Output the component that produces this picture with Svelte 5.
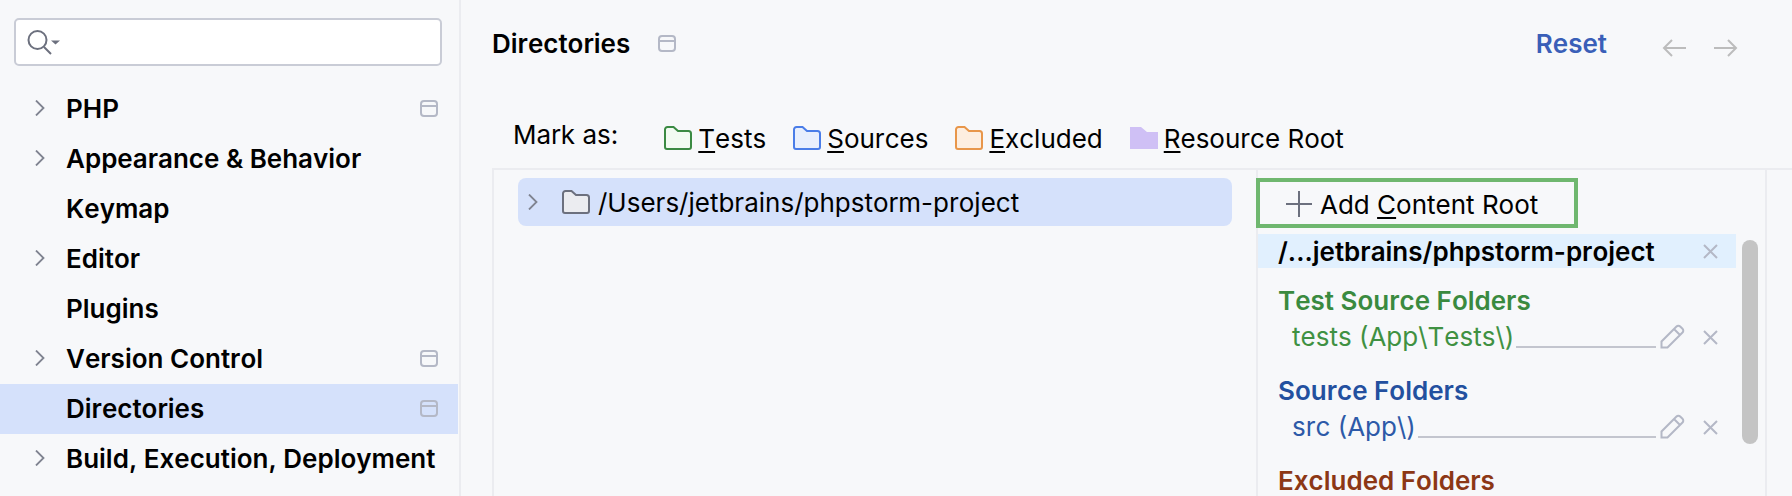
<script>
	const items = [
		{ name: 'PHP', arrow: true, mark: true },
		{ name: 'Appearance & Behavior', arrow: true },
		{ name: 'Keymap' },
		{ name: 'Editor', arrow: true },
		{ name: 'Plugins' },
		{ name: 'Version Control', arrow: true, mark: true },
		{ name: 'Directories', mark: true, selected: true },
		{ name: 'Build, Execution, Deployment', arrow: true }
	];

	const marks = [
		{ key: 'T', rest: 'ests', stroke: '#3b8a43', fill: '#f2fbf2' },
		{ key: 'S', rest: 'ources', stroke: '#4a7de8', fill: '#e8effd' },
		{ key: 'E', rest: 'xcluded', stroke: '#e8964a', fill: '#fdeee0' },
		{ key: 'R', rest: 'esource Root', stroke: '#cfc0f5', fill: '#cfc0f5', solid: true }
	];

	const groups = [
		{ title: 'Test Source Folders', path: 'tests (App\\Tests\\)', color: '#3a8a3f', light: '#3f9142' },
		{ title: 'Source Folders', path: 'src (App\\)', color: '#23509f', light: '#2d5aa8' }
	];
</script>

{#snippet folder(stroke, fill)}
	<svg class="folder" width="28" height="24" viewBox="0 0 28 24">
		<path d="M1 3.5A2.5 2.5 0 0 1 3.5 1h6l4.5 4h10.5A2.5 2.5 0 0 1 27 7.5V21a2 2 0 0 1-2 2H3a2 2 0 0 1-2-2z" fill={fill} stroke={stroke} stroke-width="2"/>
	</svg>
{/snippet}

{#snippet projectMark()}
	<svg class="pm" width="18" height="17" viewBox="0 0 18 17">
		<rect x="1" y="1" width="16" height="15" rx="3" fill="none" stroke="#b4b8c6" stroke-width="2"/>
		<path d="M1 6h16" stroke="#b4b8c6" stroke-width="2"/>
	</svg>
{/snippet}

{#snippet chevron()}
	<svg class="chev" width="11" height="16" viewBox="0 0 11 16">
		<path d="M1 .5L8.500 8 1 15.500" fill="none" stroke="#7f8390" stroke-width="1.8"/>
	</svg>
{/snippet}

{#snippet cross()}
	<svg class="cross" width="15" height="15" viewBox="0 0 15 15">
		<path d="M1 1l13 13M14 1L1 14" stroke="#b4b8c6" stroke-width="2"/>
	</svg>
{/snippet}

{#snippet pencil()}
	<svg class="pencil" width="25" height="25" viewBox="0 0 25 25">
		<path d="M1.500 23.500v-6L16.500 2.500a2.600 2.600 0 0 1 3.700 0l2.300 2.300a2.600 2.600 0 0 1 0 3.700L7.500 23.500zM14 5l6 6" fill="none" stroke="#b4b8c6" stroke-width="2"/>
	</svg>
{/snippet}

<div class="page">
	<aside>
		<div class="search">
			<svg width="34" height="25" viewBox="0 0 34 25">
				<circle cx="10.500" cy="10" r="9" fill="none" stroke="#6c707e" stroke-width="2"/>
				<path d="M17 17l7 7" stroke="#6c707e" stroke-width="2"/>
				<path d="M24 10.500h9l-4.500 4z" fill="#6c707e"/>
			</svg>
		</div>
		<ul>
			{#each items as item}
				<li class:selected={item.selected}>
					<span class="arrow">
						{#if item.arrow}{@render chevron()}{/if}
					</span>
					<span class="name">{item.name}</span>
					{#if item.mark}{@render projectMark()}{/if}
				</li>
			{/each}
		</ul>
	</aside>

	<main>
		<header>
			<h1>Directories</h1>
			{@render projectMark()}
			<span class="reset">Reset</span>
			<svg class="nav" width="24" height="20" viewBox="0 0 24 20">
				<path d="M24 10H2M10 2l-8 8 8 8" fill="none" stroke="#bcbcbc" stroke-width="2"/>
			</svg>
			<svg class="nav" width="24" height="20" viewBox="0 0 24 20">
				<path d="M0 10h22M14 2l8 8-8 8" fill="none" stroke="#bcbcbc" stroke-width="2"/>
			</svg>
		</header>

		<div class="markbar">
			<span class="label">Mark as:</span>
			{#each marks as m}
				<span class="mark">
					{#if m.solid}
						<svg class="folder" width="28" height="24" viewBox="0 0 28 24">
							<path d="M0 1h11l6 5h11v17H0z" fill={m.fill}/>
						</svg>
					{:else}
						{@render folder(m.stroke, m.fill)}
					{/if}
					<span><u>{m.key}</u>{m.rest}</span>
				</span>
			{/each}
		</div>

		<div class="panel">
			<div class="tree">
				<div class="root">
					{@render chevron()}
					{@render folder('#6c707e', '#ebecf0')}
					<span>/Users/jetbrains/phpstorm-project</span>
				</div>
			</div>

			<div class="roots">
				<button class="add">
					<svg width="26" height="26" viewBox="0 0 26 26">
						<path d="M0 13h26M13 0v26" stroke="#6c707e" stroke-width="2"/>
					</svg>
					<span>Add <u>C</u>ontent Root</span>
				</button>
				<div class="scroller">
					<div class="list">
						<div class="current">
							<span>/...jetbrains/phpstorm-project</span>
							{@render cross()}
						</div>
						{#each groups as g}
							<div class="group">
								<div class="title" style="color: {g.color}">{g.title}</div>
								<div class="entry">
									<span class="path" style="color: {g.light}">{g.path}</span>
									<span class="leader"></span>
									{@render pencil()}
									{@render cross()}
								</div>
							</div>
						{/each}
						<div class="group">
							<div class="title excluded">Excluded Folders</div>
						</div>
					</div>
					<div class="thumb"></div>
				</div>
			</div>
		</div>
	</main>
</div>

<style>
	:global(body) {
		background: #f7f8fa;
	}

	.page {
		display: flex;
		width: 1792px;
		height: 496px;
		overflow: hidden;
		font-family: Inter, "Liberation Sans", sans-serif;
		font-size: 26px;
		font-kerning: none;
		color: #000;
		background: #f7f8fa;
	}

	aside {
		width: 459px;
		flex: none;
		border-right: 2px solid #ebecf0;
	}

	.search {
		margin: 18px 17px 0 14px;
		height: 48px;
		box-sizing: border-box;
		border: 2px solid #c9ccd6;
		border-radius: 5px;
		background: #fff;
		padding: 10px 0 0 11px;
	}

	.search svg {
		display: block;
	}

	ul {
		list-style: none;
		margin: 18px 1px 0 0;
		padding: 0;
	}

	li {
		display: flex;
		align-items: center;
		height: 50px;
		box-sizing: border-box;
		padding: 0 20px 2px 35px;
		font-weight: 600;
	}

	li.selected {
		background: #d5e1fb;
	}

	.arrow {
		width: 31px;
		flex: none;
		display: flex;
	}

	.name {
		flex: 1;
		white-space: nowrap;
	}

	main {
		flex: 1;
		display: flex;
		flex-direction: column;
		min-width: 0;
	}

	header {
		display: flex;
		align-items: center;
		height: 86px;
		padding: 0 54px 0 31px;
	}

	h1 {
		margin: 0 28px 0 0;
		font-size: 26px;
		font-weight: 600;
	}

	.reset {
		margin-left: auto;
		font-weight: 600;
		color: #3a5fb8;
		margin-right: 55px;
	}

	.nav {
		margin-top: 10px;
	}

	.nav + .nav {
		margin-left: 28px;
	}

	.markbar {
		display: flex;
		align-items: center;
		height: 82px;
		box-sizing: border-box;
		padding: 22px 0 0 52px;
	}

	.label {
		margin-right: 46px;
		margin-top: -8px;
	}

	.mark {
		display: flex;
		align-items: center;
		gap: 6px;
		margin-right: 27px;
	}

	u {
		text-decoration-thickness: 2px;
		text-underline-offset: 3px;
	}

	.panel {
		flex: 1;
		display: flex;
		margin-left: 31px;
		border-top: 2px solid #ebecf0;
		border-left: 2px solid #ebecf0;
		min-height: 0;
	}

	.tree {
		width: 764px;
		flex: none;
		box-sizing: border-box;
		padding: 8px 24px;
		border-right: 2px solid #ebecf0;
	}

	.root {
		display: flex;
		align-items: center;
		height: 48px;
		border-radius: 8px;
		background: #d5e1fb;
		padding-left: 10px;
	}

	.root .folder {
		margin: 0 8px 0 23px;
	}

	.root span {
		white-space: nowrap;
	}

	.roots {
		width: 507px;
		flex: none;
		border-right: 2px solid #ebecf0;
		min-height: 0;
	}

	.add {
		display: flex;
		align-items: center;
		gap: 8px;
		width: 322px;
		height: 50px;
		box-sizing: border-box;
		margin: 8px 0 0 -2px;
		padding: 2px 0 0 26px;
		border: 4px solid #6fb76f;
		background: none;
		font: inherit;
		font-kerning: none;
		color: inherit;
	}

	.scroller {
		position: relative;
		margin-top: 6px;
	}

	.list {
		width: 478px;
	}

	.current {
		display: flex;
		align-items: center;
		height: 34px;
		padding: 0 18px 0 20px;
		background: #e1f0fe;
		font-weight: 600;
	}

	.current span,
	.entry .path {
		white-space: nowrap;
	}

	.current span {
		flex: 1;
	}

	.group {
		padding: 14px 0 3px 20px;
	}

	.title {
		font-weight: 600;
		line-height: 37px;
	}

	.excluded {
		color: #8c3715;
		line-height: 28px;
		margin-top: 5px;
	}

	.entry {
		display: flex;
		align-items: center;
		height: 36px;
		padding: 0 18px 0 14px;
	}

	.path {
		margin-top: -2px;
	}

	.leader {
		flex: 1;
		height: 2px;
		background: #c3c5ce;
		align-self: flex-end;
		margin: 0 4px 7px 2px;
	}

	.pencil {
		margin: -2px 18px 0 0;
	}

	.thumb {
		position: absolute;
		top: 6px;
		left: 484px;
		width: 16px;
		height: 204px;
		border-radius: 8px;
		background: #c4c4c4;
	}
</style>
